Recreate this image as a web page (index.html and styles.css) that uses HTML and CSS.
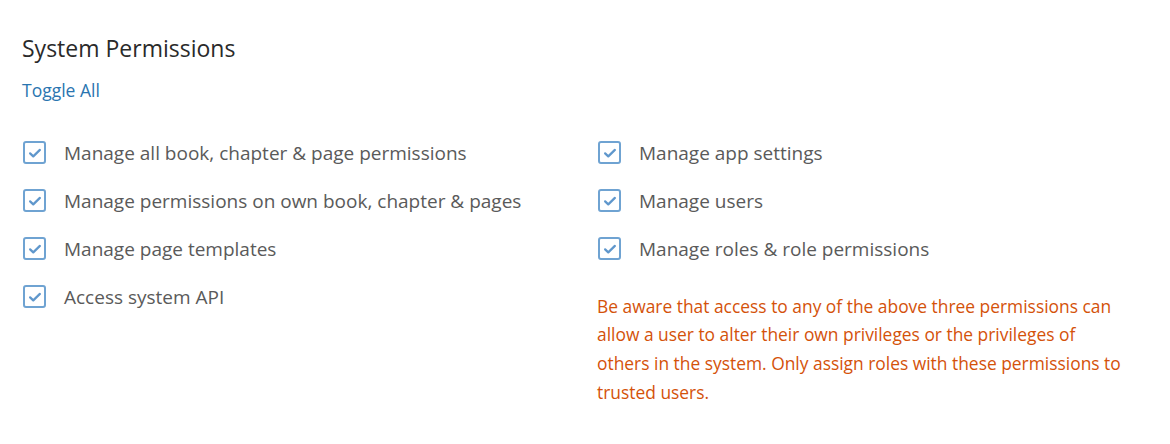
FILE: index.html
```html
<!DOCTYPE html>
<html lang="en">
<head>
    <meta charset="UTF-8">
    <meta name="viewport" content="width=device-width, initial-scale=1.0">
    <title>System Permissions</title>
    <link rel="stylesheet" href="styles.css">
</head>
<body>
    <section class="permissions">
        <h2>System Permissions</h2>
        <a href="#" class="toggle-all">Toggle All</a>

        <div class="perm-grid">
            <div class="perm-col">
                <label class="perm"><span class="box"><svg viewBox="0 0 24 24"><path d="M5.5 12.5l4.2 4 8.8-8.6"/></svg></span>Manage all book, chapter &amp; page permissions</label>
                <label class="perm"><span class="box"><svg viewBox="0 0 24 24"><path d="M5.5 12.5l4.2 4 8.8-8.6"/></svg></span>Manage permissions on own book, chapter &amp; pages</label>
                <label class="perm"><span class="box"><svg viewBox="0 0 24 24"><path d="M5.5 12.5l4.2 4 8.8-8.6"/></svg></span>Manage page templates</label>
                <label class="perm"><span class="box"><svg viewBox="0 0 24 24"><path d="M5.5 12.5l4.2 4 8.8-8.6"/></svg></span>Access system API</label>
            </div>
            <div class="perm-col">
                <label class="perm"><span class="box"><svg viewBox="0 0 24 24"><path d="M5.5 12.5l4.2 4 8.8-8.6"/></svg></span>Manage app settings</label>
                <label class="perm"><span class="box"><svg viewBox="0 0 24 24"><path d="M5.5 12.5l4.2 4 8.8-8.6"/></svg></span>Manage users</label>
                <label class="perm"><span class="box"><svg viewBox="0 0 24 24"><path d="M5.5 12.5l4.2 4 8.8-8.6"/></svg></span>Manage roles &amp; role permissions</label>
                <p class="warning">Be aware that access to any of the above three permissions can allow a user to alter their own privileges or the privileges of others in the system. Only assign roles with these permissions to trusted users.</p>
            </div>
        </div>
    </section>
</body>
</html>
```

FILE: styles.css
```css
* { box-sizing: border-box; margin: 0; padding: 0; }

body {
    font-family: 'Open Sans', sans-serif;
    background: #fff;
    color: #5a5a5a;
}

.permissions { padding: 35px 22px 20px 22px; }

h2 {
    font-size: 23px;
    font-weight: 400;
    color: #2a2a2a;
    line-height: 1.2;
}

.toggle-all {
    display: inline-block;
    margin-top: 15px;
    font-size: 17.5px;
    color: #2a75b0;
    text-decoration: none;
}

.perm-grid {
    display: grid;
    grid-template-columns: 551px 530px;
    column-gap: 24px;
    margin-top: 27px;
}

.perm {
    display: flex;
    align-items: center;
    height: 48px;
    font-size: 19px;
    cursor: pointer;
}

.box {
    width: 23px; height: 23px;
    border: 2.5px solid #6fa3d2;
    border-radius: 3px;
    margin: 0 18px 0 1px;
    display: flex;
    align-items: center;
    justify-content: center;
    flex-shrink: 0;
}
.box svg { width: 18px; height: 18px; }
.box path { fill: none; stroke: #5f97cc; stroke-width: 3; stroke-linecap: round; stroke-linejoin: round; }

.warning {
    color: #d4520a;
    font-size: 17.4px;
    line-height: 28.7px;
    margin-top: 19px;
}
```
